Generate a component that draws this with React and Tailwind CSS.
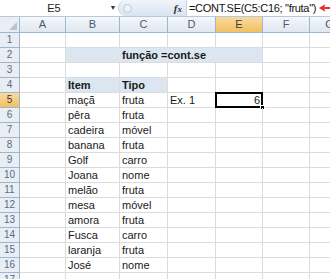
import React from 'react';

const cols = [
  { name: 'A', w: 'w-[46px]' },
  { name: 'B', w: 'w-[54px]' },
  { name: 'C', w: 'w-[48px]' },
  { name: 'D', w: 'w-[48px]' },
  { name: 'E', w: 'w-[47px]' },
  { name: 'F', w: 'w-[47px]' },
  { name: 'G', w: 'w-[40px]' },
];

const data = [
  ['maçã', 'fruta'],
  ['pêra', 'fruta'],
  ['cadeira', 'móvel'],
  ['banana', 'fruta'],
  ['Golf', 'carro'],
  ['Joana', 'nome'],
  ['melão', 'fruta'],
  ['mesa', 'móvel'],
  ['amora', 'fruta'],
  ['Fusca', 'carro'],
  ['laranja', 'fruta'],
  ['José', 'nome'],
];

const cell = 'h-[15px] shrink-0 border-r border-b border-[#dadcdd] px-[2px] leading-[14px] overflow-hidden whitespace-nowrap';

const RowHead = ({ n, active }) => (
  <div
    className={`w-[20px] h-[15px] shrink-0 border-r border-b border-[#9eb6ce] text-center leading-[14px] text-[10px] ${
      active ? 'bg-gradient-to-b from-[#f9d99f] to-[#f1c15f] text-[#3c3c3c]' : 'bg-[#e9eef5] text-[#5b6b7e]'
    }`}
  >
    {n}
  </div>
);

const Row = ({ n, active, children }) => (
  <div className="flex">
    <RowHead n={n} active={active} />
    {children}
  </div>
);

const Empty = ({ w, extra = '' }) => <div className={`${cell} ${w} ${extra}`} />;

export default function App() {
  return (
    <div className="w-[330px] h-[279px] overflow-hidden bg-white text-[11px] text-[#1a1a1a]" style={{ fontFamily: '"Liberation Sans", Arial, sans-serif' }}>
      {/* formula bar */}
      <div className="flex h-[17px] border-b border-[#b8c8dc] bg-white">
        <div className="w-[108px] shrink-0 text-center text-[11px] leading-[16px] text-[#222]">E5</div>
        <div className="w-[10px] shrink-0 flex items-center justify-center text-[7px] text-[#333]">▼</div>
        <div className="w-[68px] shrink-0 flex items-center justify-between rounded-l-full bg-gradient-to-b from-[#f1f5fb] to-[#d9e3f0] pl-[4px] pr-[4px] border-l border-[#c9d5e4]">
          <div className="w-[9px] h-[9px] rounded-full border border-[#b9c7d8] bg-[#eef2f7]" />
          <span className="italic font-bold text-[11px] text-[#333]" style={{ fontFamily: '"Liberation Serif", serif' }}>
            f<span className="text-[9px]">x</span>
          </span>
        </div>
        <div className="flex-1 min-w-0 flex items-center pl-[2px] border-l border-[#c9d5e4] text-[11px] tracking-[-0.3px] text-[#111] whitespace-nowrap">
          =CONT.SE(C5:C16; "fruta")
          <svg width="20" height="10" viewBox="0 0 22 10" className="ml-[2px] shrink-0">
            <path d="M1 5 L8 1 L7 4 L21 4 L21 6 L7 6 L8 9 Z" fill="#e8312f" />
          </svg>
        </div>
      </div>

      {/* column headers */}
      <div className="flex h-[16px]">
        <div className="w-[20px] h-[16px] shrink-0 border-r border-b border-[#9eb6ce] bg-[#e9eef5] relative">
          <svg width="8" height="8" className="absolute right-[2px] bottom-[2px]">
            <path d="M8 0 L8 8 L0 8 Z" fill="#b7c3d1" />
          </svg>
        </div>
        {cols.map((c) => (
          <div
            key={c.name}
            className={`${c.w} h-[16px] shrink-0 border-r border-b border-[#9eb6ce] text-center leading-[15px] text-[11px] ${
              c.name === 'E'
                ? 'bg-gradient-to-b from-[#f9d99f] to-[#f1c15f] text-[#3c3c3c]'
                : 'bg-gradient-to-b from-[#f4f7fb] to-[#e0e7f0] text-[#4a5a6e]'
            }`}
          >
            {c.name}
          </div>
        ))}
      </div>

      <Row n={1}>
        {cols.map((c) => (
          <Empty key={c.name} w={c.w} />
        ))}
      </Row>

      <Row n={2}>
        <Empty w="w-[46px]" />
        <div className={`${cell} w-[197px] bg-[#dce6f1] text-center font-bold`}>função =cont.se</div>
        <Empty w="w-[47px]" />
        <Empty w="w-[40px]" />
      </Row>

      <Row n={3}>
        {cols.map((c) => (
          <Empty key={c.name} w={c.w} />
        ))}
      </Row>

      <Row n={4}>
        <Empty w="w-[46px]" />
        <div className={`${cell} w-[54px] bg-[#dce6f1] font-bold`}>Item</div>
        <div className={`${cell} w-[48px] bg-[#dce6f1] font-bold`}>Tipo</div>
        <Empty w="w-[48px]" />
        <Empty w="w-[47px]" />
        <Empty w="w-[47px]" />
        <Empty w="w-[40px]" />
      </Row>

      {data.map(([item, tipo], i) => {
        const n = i + 5;
        return (
          <Row key={n} n={n} active={n === 5}>
            <Empty w="w-[46px]" />
            <div className={`${cell} w-[54px]`}>{item}</div>
            <div className={`${cell} w-[48px]`}>{tipo}</div>
            <div className={`${cell} w-[48px]`}>{n === 5 ? 'Ex. 1' : ''}</div>
            <div className={`${cell} w-[47px] relative text-right overflow-visible`}>
              {n === 5 && (
                <>
                  6
                  <div className="absolute left-[-1px] top-[-1px] w-[48px] h-[16px] border-2 border-black" />
                  <div className="absolute right-[-3px] bottom-[-3px] w-[5px] h-[5px] bg-black border border-white" />
                </>
              )}
            </div>
            <Empty w="w-[47px]" />
            <Empty w="w-[40px]" />
          </Row>
        );
      })}

      <Row n={17}>
        {cols.map((c) => (
          <Empty key={c.name} w={c.w} />
        ))}
      </Row>
    </div>
  );
}
